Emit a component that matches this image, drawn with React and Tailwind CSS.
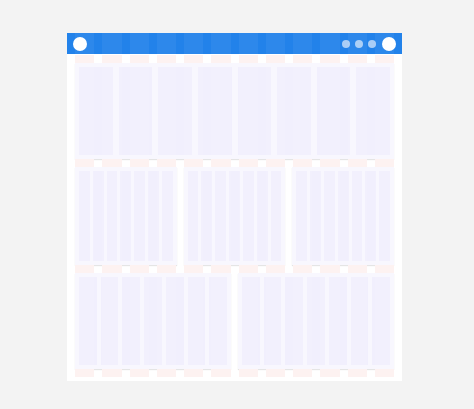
import React from "react";

const COLS = Array.from({ length: 12 });

function PinkStrip() {
  return (
    <div className="flex h-[8px] gap-[8px] px-2">
      {COLS.map((_, i) => (
        <div key={i} className="flex-1 bg-[#fdf1f0]" />
      ))}
    </div>
  );
}

function Card({ panels, className = "" }) {
  return (
    <div className={`flex bg-[#f8f7fe] p-[4px] shadow-[0_1px_1px_rgba(0,0,0,0.1)] ${className}`}>
      {Array.from({ length: panels }).map((_, i) => (
        <div key={i} className="flex-1 bg-[#f1effd]" />
      ))}
    </div>
  );
}

export default function App() {
  return (
    <div className="h-[409px] w-[474px] bg-[#f3f3f3] pt-[33px] pl-[67px]">
      <div className="relative flex h-[348px] w-[335px] flex-col bg-white">
        <div className="flex h-[21px] items-center justify-between bg-[#2282ea] px-[6px]">
          <div className="h-[14px] w-[14px] rounded-full bg-white" />
          <div className="flex items-center gap-[5px]">
            <div className="h-[8px] w-[8px] rounded-full bg-[#a9cdf6]" />
            <div className="h-[8px] w-[8px] rounded-full bg-[#a9cdf6]" />
            <div className="h-[8px] w-[8px] rounded-full bg-[#a9cdf6]" />
            <div className="ml-[1px] h-[14px] w-[14px] rounded-full bg-white" />
          </div>
        </div>
        <div className="mt-[1px]">
          <PinkStrip />
        </div>
        <div className="px-2">
          <Card panels={8} className="h-[96px] gap-[6px]" />
        </div>
        <PinkStrip />
        <div className="flex gap-[7px] px-2">
          <Card panels={7} className="h-[98px] flex-1 gap-[3px]" />
          <Card panels={7} className="h-[98px] flex-1 gap-[3px]" />
          <Card panels={7} className="h-[98px] flex-1 gap-[3px]" />
        </div>
        <PinkStrip />
        <div className="flex gap-[7px] px-2">
          <Card panels={7} className="h-[96px] flex-1 gap-[4px]" />
          <Card panels={7} className="h-[96px] flex-1 gap-[4px]" />
        </div>
        <PinkStrip />
        <div className="pointer-events-none absolute inset-x-2 top-0 bottom-0 flex gap-[8px]">
          {COLS.map((_, i) => (
            <div key={i} className="flex-1 bg-white/[0.05]" />
          ))}
        </div>
      </div>
    </div>
  );
}
